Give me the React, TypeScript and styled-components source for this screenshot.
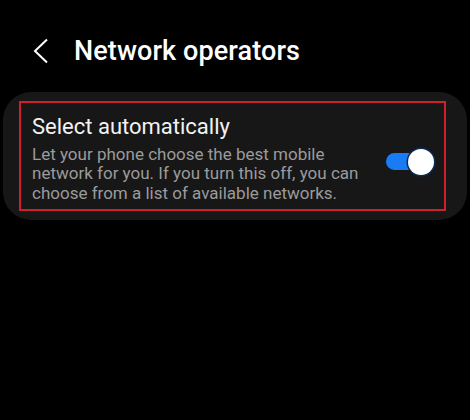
import React, { useState } from 'react';
import styled, { createGlobalStyle } from 'styled-components';

const GlobalStyle = createGlobalStyle`
  html, body {
    margin: 0;
    padding: 0;
    background: #000;
  }
  body {
    font-family: Roboto, "Noto Sans", "Liberation Sans", sans-serif;
  }
`;

const Screen = styled.div`
  width: 470px;
  height: 420px;
  background: #000;
  overflow: hidden;
  padding-top: 36px;
  box-sizing: border-box;
`;

const Header = styled.header`
  display: flex;
  align-items: center;
  height: 30px;
  padding-left: 30px;
  gap: 24px;
`;

const BackButton = styled.button`
  display: flex;
  align-items: center;
  justify-content: center;
  width: 20px;
  height: 30px;
  padding: 0;
  border: none;
  background: none;
  cursor: pointer;
`;

const Title = styled.h1`
  margin: 0;
  color: #fff;
  font-size: 27px;
  font-weight: 500;
  letter-spacing: 0.1px;
`;

const Card = styled.section`
  margin: 26px 3px 0 3px;
  background: #171717;
  border-radius: 28px;
  padding: 9px 21px 9px 16px;
`;

const Highlight = styled.div`
  display: flex;
  align-items: center;
  justify-content: space-between;
  border: 2px solid #cf1f2b;
  padding: 10px 9px 5.5px 11px;
`;

const TextCol = styled.div`
  width: 340px;
  display: flex;
  flex-direction: column;
`;

const ItemTitle = styled.div`
  color: #f2f2f2;
  font-size: 22px;
  line-height: 28px;
`;

const ItemDesc = styled.div`
  color: #9b9b9b;
  font-size: 17px;
  line-height: 19.5px;
  margin-top: 3.5px;
`;

const Switch = styled.button<{ $on: boolean }>`
  position: relative;
  width: 49px;
  height: 17px;
  margin-top: 7px;
  flex-shrink: 0;
  padding: 0;
  border: none;
  border-radius: 9px;
  background: ${(p) => (p.$on ? '#1a7cf4' : '#555')};
  cursor: pointer;
`;

const Knob = styled.span<{ $on: boolean }>`
  position: absolute;
  top: 50%;
  left: ${(p) => (p.$on ? '22px' : '0')};
  width: 26px;
  height: 26px;
  margin-top: -13px;
  border-radius: 50%;
  background: #fff;
  box-shadow: 0 0 0 1.5px #0b2a55;
`;

const App: React.FC = () => {
  const [auto, setAuto] = useState(true);

  return (
    <>
      <GlobalStyle />
      <Screen>
        <Header>
          <BackButton aria-label="Back">
            <svg width="15" height="26" viewBox="0 0 15 26">
              <path d="M14 1.5 L2 13 L14 24.5" fill="none" stroke="#fff" strokeWidth="2" />
            </svg>
          </BackButton>
          <Title>Network operators</Title>
        </Header>

        <Card>
          <Highlight>
            <TextCol>
              <ItemTitle>Select automatically</ItemTitle>
              <ItemDesc>
                Let your phone choose the best mobile network for you. If you turn this off, you can
                choose from a list of available networks.
              </ItemDesc>
            </TextCol>
            <Switch $on={auto} onClick={() => setAuto(!auto)} aria-label="Select automatically">
              <Knob $on={auto} />
            </Switch>
          </Highlight>
        </Card>
      </Screen>
    </>
  );
};

export default App;
